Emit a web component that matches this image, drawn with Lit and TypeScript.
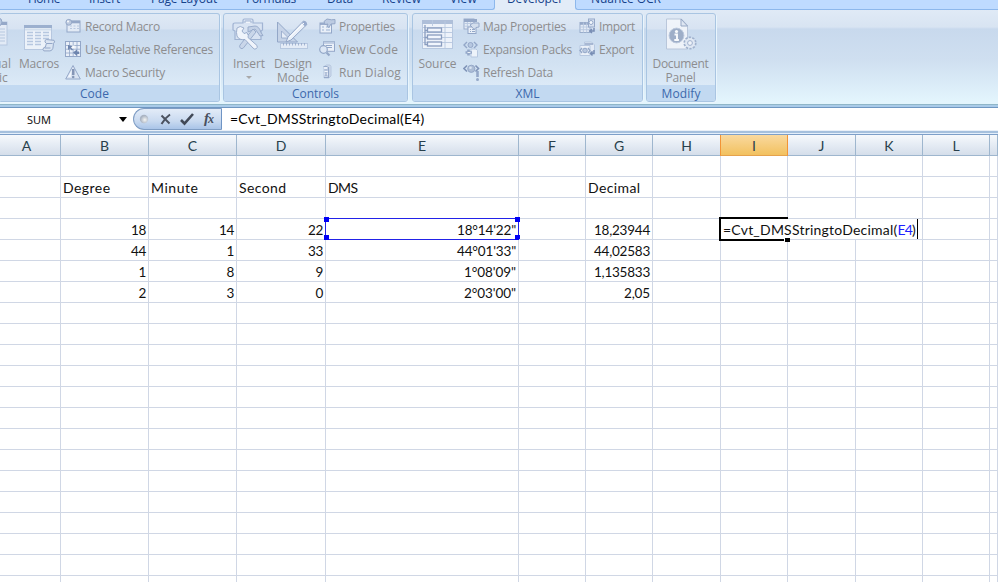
import { LitElement, html, css, svg, nothing } from "lit";
import { customElement, property } from "lit/decorators.js";
import { classMap } from "lit/directives/class-map.js";
import { styleMap } from "lit/directives/style-map.js";

/** A single line of text tracked so that it fills a given width. */
@customElement("fit-text")
class FitText extends LitElement {
  @property() text = "";
  @property({ type: Number }) width = 0;
  static styles = css`
    :host { display: inline-block; white-space: pre; }
    span { display: inline-block; }
  `;
  updated() {
    const span = this.renderRoot.querySelector("span") as HTMLElement;
    span.style.letterSpacing = "0px";
    if (!this.width) return;
    const natural = span.getBoundingClientRect().width;
    span.style.letterSpacing = `${(this.width - natural) / this.text.length}px`;
  }
  render() {
    return html`<span>${this.text}</span>`;
  }
}

const fit = (text: string, width: number) =>
  html`<fit-text .text=${text} .width=${width}></fit-text>`;

const L = "#e6edf7";
const M = "#b4c5de";
const D = "#8ca0c3";

const grid16 = (x: number, y: number) => svg`
  <rect x=${x} y=${y} width="10" height="10" fill=${L} stroke=${D} stroke-width=".9"/>
  <path d=${`M${x} ${y + 1.2}h10`} stroke=${D} stroke-width="2.2"/>
  <path d=${`M${x} ${y + 4.5}h10M${x} ${y + 7.2}h10M${x + 3.4} ${y}v10M${x + 6.7} ${y}v10`} stroke=${M} stroke-width=".9"/>`;

const icons: Record<string, unknown> = {
  basic: svg`<rect x="1" y="4" width="29" height="23" fill=${L} stroke=${M}/>
    <path d="M1 5.500h29" stroke=${D} stroke-width="3"/>
    <circle cx="21" cy="4" r="4" fill=${M} stroke=${D}/>
    <path d="M19 11h9M19 14h9M19 17h9M19 20h9M19 23h9" stroke=${M}/>`,
  macros: svg`<rect x="2.500" y="7.500" width="27" height="24" fill="#f1f5fb" stroke=${M}/>
    <path d="M2 8.500h28" stroke="#94a9cb" stroke-width="3"/><path d="M3 11.500h26" stroke="#d3deed" stroke-width="2"/>
    <path d="M5 14.500h6M13 14.500h6M21 14.500h6M5 17.500h6M13 17.500h6M21 17.500h6M5 20.500h6M13 20.500h6M21 20.500h6M5 23.500h6M13 23.500h6M5 26.500h6M13 26.500h6" stroke=${M} stroke-width="1.400"/>
    <path d="M23 22.500q1-1.500 3-.8l6 .6q1.500 1.700-.5 3l-.6 5q-1 2.700-3 2.600h-6q-2-1.500 0-3.400l1.500-.4 1-3.800q-2-1-1.400-2.800z" fill="#dce6f3" stroke=${D}/>
    <path d="M24.500 25.500h6M22.500 30h6" stroke=${D}/>`,
  record: svg`<rect x="2" y="3" width="13" height="11" fill=${L} stroke=${D}/>
    <path d="M2 4h13" stroke=${D} stroke-width="2.600"/><path d="M5 8h2M8.500 8h2M12 8h2M5 10.500h2M8.500 10.500h2M12 10.500h2" stroke=${M}/>
    <circle cx="3.800" cy="4.300" r="2.900" fill="#b9c6dc" stroke=${D}/><circle cx="3" cy="3.500" r="1" fill="#fff"/>`,
  relative: svg`<rect x=".500" y=".500" width="15" height="15" fill="#edf2fa" stroke=${D}/>
    <path d="M.5 4.500h15M.5 8.200h15M.5 12h15M4.500 .5v15M8.200 .5v15M12 .5v15" stroke=${D} stroke-width=".800"/>
    <path d="M4.500 4.500h5v3h-5z" fill="#fff"/>
    <path d="M3 4v5l2-1.500 2 2 1-1-2-2L7.500 5zM8 11.500l4-3v2h2v2.500h-2v2z" fill="#6179a5"/>`,
  security: svg`<path d="M8 1.500 15.300 15H.7z" fill="#dae3f1" stroke=${D} stroke-linejoin="round"/>
    <path d="M8 3.500 3 13h2.500z" fill="#f7faff"/>
    <path d="M8.200 5v6" stroke="#7a8cae" stroke-width="2.600"/><circle cx="8.200" cy="13" r="1.300" fill="#7a8cae"/>`,
  insert: svg`<path d="M11 5V2.500Q11 1 12.500 1h7Q21 1 21 2.500V5h9.500v7l-1.500 1v8.500H3V13l-2-1V7q0-2 2-2z" fill="#dae4f3" stroke="#9aaecf" stroke-width="1.200"/>
    <path d="M13 5V3h6v2" fill="#f5f8fd" stroke="#9aaecf"/>
    <path d="M16 9l7-1q4 0 6 6.500l2 3-3 .5-2-3-3-4-7 3z" fill="#c1cfe5" stroke=${D} stroke-width=".900"/>
    <path d="M21 11 8 27q-1 2 .5 3.200t3-.4L24 14z" fill="#c9d6e9" stroke=${D} stroke-width=".900"/>
    <path d="M5 10q3-3 7 0l-2 3 2 2.500 3-1q2 3.300 1 5l9 8q1 2.500-1 3.300t-3-.8l-8-8.500q-6 1-8-3.500-1-3 0-8z" fill="#f5f8fd" stroke=${D} stroke-width=".900"/>`,
  design: svg`<path d="M1.500 4v20h20z" fill="#c5d2e7" stroke=${D}/><path d="M5.500 13v7h7z" fill="#eaf0f9" stroke=${D} stroke-width=".800"/>
    <path d="M27.500 3q3 1 3.400 3.500L15 22l-5 2 2-5z" fill="#eff4fb" stroke=${D}/>
    <path d="M26 5l3 3.500 2-2q0-3-3-3.800z" fill="#8fa4c8"/><path d="M14 19l14-14" stroke="#fff"/>
    <rect x="4.500" y="25.500" width="27" height="5" fill="#e8eef8" stroke=${M}/><path d="M7.500 25v2.500M10.500 25v2.500M13.500 25v2.500M16.500 25v2.500M19.500 25v2.500M22.500 25v2.500M25.500 25v2.500M28.500 25v2.500" stroke=${D} stroke-width=".800"/>`,
  properties: svg`<rect x="1" y="5" width="11.500" height="10" fill="#eef3fa" stroke=${D}/><path d="M1 6h11" stroke=${D} stroke-width="1.800"/>
    <path d="M3 9h2M3 12h2M7 9h4M7 12h4" stroke=${M} stroke-width="1.600"/>
    <path d="M5 3.500 8 1l4.500.8 3.500-.3v4.200L12 6l-2 3.500L8 8l1-2-3 .5z" fill="#b9c8e0" stroke=${D}/>`,
  view: svg`<rect x="4.500" y=".800" width="11" height="9.500" fill="#f0f4fb" stroke=${D}/><path d="M4.500 2h11" stroke=${M} stroke-width="1.500"/>
    <path d="M7 4.500h6M8 6.500h5" stroke=${D}/><circle cx="4.500" cy="8.500" r="3.800" fill="#dfe9f6" stroke=${D} stroke-width="1.200"/>
    <path d="M7.500 11.500l3 3" stroke=${D} stroke-width="2.200"/>`,
  run: svg`<path d="M5 2.500 7.500 1h3.500l1 1.500V12l-2 2H5z" fill="#cbd7e9" stroke=${M}/>
    <path d="M5 4h3M5.500 7.500h4.500M5.500 10h4.500" stroke="#f7faff" stroke-width="1.500"/>
    <path d="M4.500 2.500h4M9.500 3v10M5 13.500h5M5.500 6h3M7 8v4" stroke=${D} stroke-width="1.200"/>`,
  source: svg`<rect x="1.500" y="2.500" width="30" height="28" fill="#f2f6fc" stroke=${M}/>
    <path d="M1 4h31" stroke="#a9bad6" stroke-width="4"/>
    <path d="M2 9.500h29M2 14.500h29M2 19.500h29M2 24.500h29M24 3v27M11.500 2v6" stroke=${M} stroke-width=".900"/>
    <path d="M4 7v19.500h3M4 12.500h3M4 19.500h3" stroke="#8094b9" stroke-width="1.300" fill="none"/>
    <g fill="#f7faff" stroke="#8094b9" stroke-width="1.300"><rect x="6.500" y="10" width="14" height="4"/><rect x="6.500" y="17" width="14" height="4"/><rect x="6.500" y="24" width="14" height="4"/></g>`,
  map: svg`${grid16(1, 1)}<path d="M1 1h13v3H1z" fill=${D}/>
    <rect x="5" y="9" width="8" height="6.500" fill="#eef3fa" stroke=${D}/><path d="M7 11.500h1M9 11.500h3M7 13.500h1M9 13.500h3" stroke=${D}/>
    <path d="M7 7l3-2h6v4l-3 .5-2 2-1.500-2z" fill="#d3deed" stroke=${D}/>`,
  expansion: svg`<path d="M4 1 1 4l3 3M11 1l3 3-3 3" stroke=${D} stroke-width="1.400" fill="none"/><circle cx="7.500" cy="4" r="2.500" fill=${M} stroke=${D}/>
    <path d="M8 8h5l1.500 1.500V16H8z" fill="#f2f6fc" stroke=${M}/><path d="M5.500 8.500v6M2.500 11.500h6.500" stroke=${D} stroke-width="2.600"/><path d="M4.500 11.500h3" stroke="#f2f6fc"/>`,
  refresh: svg`<path d="M4 1.500 1 4.500l3 3M12.500 1.500l3 3-3 3" stroke="#7489b0" stroke-width="1.600" fill="none"/><circle cx="8.300" cy="4.800" r="3.600" fill="#a8b9d3" stroke=${D}/>
    <circle cx="7.500" cy="3.800" r="1.300" fill="#dce6f3"/><path d="M14.500 7v6" stroke=${D} stroke-width="2.600"/><circle cx="14.500" cy="15.500" r="1.500" fill=${D}/>`,
  import: svg`${grid16(1, 4.5)}<rect x="9.500" y="1" width="6" height="8" fill="#d6e0ef" stroke=${D}/>
    <circle cx="12" cy="4.500" r="2" fill="#f7faff" stroke=${D}/><path d="M15 10v3h-4M13 11l-2.300 2 2.300 2" stroke="#6d83ad" stroke-width="1.500" fill="none"/>`,
  export: svg`<path d="M5.500 1h7l3 3v7H5.500z" fill="#e5ecf7" stroke=${M}/><path d="M1 4.500h10v10H1z" fill="#eef3fa" stroke=${M}/>
    <path d="M3 7 1 9.500 3 12M9 7l2 2.500L9 12" stroke=${D} stroke-width="1.300" fill="none"/><circle cx="6" cy="9.500" r="2.300" fill=${M} stroke=${D}/>
    <path d="M15 9v3.500h-3M13.500 10.500l-2 2 2 2" stroke="#6d83ad" stroke-width="1.500" fill="none"/><path d="M6 3h8" stroke=${D} stroke-width="1.500"/>`,
  document: svg`<path d="M2.500 1h15l6 6.500V31h-21z" fill="#f3f6fb" stroke="#b6c3d8"/><path d="M17 1v7h6.500z" fill="#dfe7f2" stroke="#8c9fbf"/>
    <circle cx="12.500" cy="17.500" r="7.400" fill="#98a8c3" stroke="#b9c6db"/>
    <circle cx="12.500" cy="13.500" r="1.600" fill="#fff"/><path d="M10.500 16.500h2.500v5M10.300 22h4.600" stroke="#fff" stroke-width="1.900" fill="none"/>
    <circle cx="26" cy="25" r="5.600" fill="#e3eaf4" stroke="#9bacc9" stroke-width="2" stroke-dasharray="2.200 1.300"/>
    <circle cx="26" cy="25" r="4.800" fill="#e3eaf4"/><circle cx="26" cy="25" r="2.400" fill="#f4f7fb" stroke="#9bacc9"/>`,
};

const icon = (name: string, size: number) => html`<svg
  class="icon" width=${size} height=${size} viewBox=${`0 0 ${size} ${size}`} fill="none">${icons[name]}</svg>`;

type Small = [string, string, number];

@customElement("ribbon-group")
class RibbonGroup extends LitElement {
  @property() label = "";
  @property({ type: Number }) labelWidth = 0;
  static styles = css`
    :host {
      box-sizing: border-box; height: 89px; display: flex; flex-direction: column;
      border: 1px solid #a9c5e2; border-radius: 3px; overflow: hidden;
      box-shadow: 1px 1px 0 #e9f5fd;
      background: linear-gradient(#dfe9f5 0, #d7e3f2 15px, #c9daee 16px, #d2e2f2 50px, #dceaf7 72px);
    }
    .body { height: 71px; display: flex; box-sizing: border-box; }
    .title {
      height: 16px; line-height: 17px; text-align: center; background: #c2d9f1;
      color: #3c68ac; font-size: 12px; padding-right: var(--title-shift, 0px);
    }
  `;
  render() {
    return html`<div class="body"><slot></slot></div>
      <div class="title">${fit(this.label, this.labelWidth)}</div>`;
  }
}

@customElement("excel-ribbon")
class ExcelRibbon extends LitElement {
  static styles = css`
    :host {
      display: block; height: 108px; overflow: hidden; font: 12px "Open Sans", "Noto Sans", sans-serif;
    }
    .tabs {
      height: 10px; display: grid; grid-template-columns: 495px 80px 1fr; overflow: hidden;
      background: #e2ecf8;
    }
    .strip { background: #bfdbff; border: 1px solid #8db8ec; border-top: 0; overflow: hidden; height: 10px; box-sizing: border-box; }
    .left { border-left: 0; border-bottom-right-radius: 3px; }
    .right { border-right: 0; border-bottom-left-radius: 3px; }
    .row { display: flex; margin-top: -10px; line-height: 18px; color: #15428b; height: 18px; }
    .panel {
      box-sizing: border-box; height: 94px; padding: 3px 0 0; display: flex;
      background: linear-gradient(#e0eaf6 0, #d8e4f2 17px, #c8d9ed 19px, #cfdff0 50px, #e3f5fd 92px);
    }
    .edge { height: 4px; background: linear-gradient(#8fb6c8 0 1px, #a9cbe8 1px 3px, #6f97c2 3px); }
    .code { width: 221px; border-left: 0; margin-left: -1px; margin-right: 3px; --title-shift: 29px; }
    .controls { width: 185px; margin-right: 4px; }
    .xml { width: 231px; margin-right: 3px; }
    .modify { width: 70px; }
    .big { display: flex; flex-direction: column; align-items: center; color: #8d8d8f; line-height: 14px; padding-top: 4px; box-sizing: border-box; }
    .big .icon { margin-bottom: 5px; flex: none; }
    .small { display: flex; flex-direction: column; padding-top: 1px; }
    .item { height: 23px; display: flex; align-items: center; color: #8d8d8f; gap: 3px; }
    .icon { display: block; flex: none; opacity: .88; }
    .arrow { width: 0; height: 0; border: 3px solid transparent; border-top-color: #a9a9aa; margin-top: 5px; border-bottom: 0; }
    .b0 { width: 12px; align-items: flex-end; }
    .b1 { width: 56px; } .b2 { width: 50px; } .b3 { width: 38px; } .b4 { width: 49px; } .b5 { width: 67px; }
    .s1 { margin-left: -2px; } .s2 { margin-left: 7px; } .s3 { margin-left: 1px; } .s4 { margin-left: 7px; }
  `;
  small(cls: string, items: Small[]) {
    return html`<div class="small ${cls}">${items.map(
      ([i, t, w]) => html`<div class="item">${icon(i, 17)}${fit(t, w)}</div>`)}</div>`;
  }
  big(cls: string, name: string, lines: [string, number][], arrow = false) {
    return html`<div class="big ${cls}">${icon(name, 34)}
      ${lines.map(([t, w]) => fit(t, w))}
      ${arrow ? html`<span class="arrow"></span>` : nothing}</div>`;
  }
  tab(text: string, width: number, margin: number) {
    return html`<span style=${styleMap({ marginLeft: `${margin}px` })}>${fit(text, width)}</span>`;
  }
  render() {
    return html`
      <div class="tabs">
        <div class="strip left"><div class="row">
          ${this.tab("Home", 32, 28)}${this.tab("Insert", 31, 29)}${this.tab("Page Layout", 66, 31)}
          ${this.tab("Formulas", 50, 29)}${this.tab("Data", 26, 31)}${this.tab("Review", 39, 29)}${this.tab("View", 27, 29)}
        </div></div>
        <div><div class="row">${this.tab("Developer", 56, 12)}</div></div>
        <div class="strip right"><div class="row">${this.tab("Nuance OCR", 70, 15)}</div></div>
      </div>
      <div class="panel">
        <ribbon-group class="code" label="Code" .labelWidth=${29}>
          ${this.big("b0", "basic", [["ual", 17], ["ic ", 12]])}
          ${this.big("b1", "macros", [["Macros", 40]])}
          ${this.small("s1", [["record", "Record Macro", 75], ["relative", "Use Relative References", 128], ["security", "Macro Security", 80]])}
        </ribbon-group>
        <ribbon-group class="controls" label="Controls" .labelWidth=${47}>
          ${this.big("b2", "insert", [["Insert", 32]], true)}
          ${this.big("b3", "design", [["Design", 38], ["Mode", 32]])}
          ${this.small("s2", [["properties", "Properties", 56], ["view", "View Code", 59], ["run", "Run Dialog", 62]])}
        </ribbon-group>
        <ribbon-group class="xml" label="XML" .labelWidth=${24}>
          ${this.big("b4", "source", [["Source", 38]])}
          ${this.small("s3", [["map", "Map Properties", 83], ["expansion", "Expansion Packs", 89], ["refresh", "Refresh Data", 70]])}
          ${this.small("s4", [["import", "Import", 36], ["export", "Export", 35]])}
        </ribbon-group>
        <ribbon-group class="modify" label="Modify" .labelWidth=${39}>
          ${this.big("b5", "document", [["Document", 56], ["Panel", 30]])}
        </ribbon-group>
      </div>
      <div class="edge"></div>`;
  }
}

@customElement("formula-bar")
class FormulaBar extends LitElement {
  static styles = css`
    :host { display: grid; grid-template-columns: 133px 89px 1fr; grid-template-rows: 22px 5px; height: 27px; background: #fff; }
    .name { box-sizing: border-box; padding: 0 6px 0 27px; display: flex; align-items: center; justify-content: space-between;
      font: 11px "Noto Sans", sans-serif; color: #111; }
    .drop { border: 4px solid transparent; border-top: 5px solid #000; border-bottom: 0; }
    .buttons { box-sizing: border-box; border: 1px solid #7f9dc4; border-right-color: #6f94c4; border-radius: 12px 0 0 12px;
      background: linear-gradient(#e3ecf8, #c9daf0 60%, #a9c4e8); display: flex; }
    svg { display: block; }
    .fx { font: italic bold 15px/19px "Liberation Serif", serif; color: #48505e; width: 16px; margin-left: 3px; letter-spacing: -1px; }
    .fx small { font-size: 12px; }
    .text { padding-left: 8px; color: #000; font: 14px/22px Lato, sans-serif; }
    .edge { grid-column: 1 / -1; background: linear-gradient(#e9f0f8 0 1px, #a5c0dd 1px 3px, #e3effb 3px 4px, #7d9fc8 4px); }
  `;
  render() {
    return html`
      <div class="name">${fit("SUM", 24)}<span class="drop"></span></div>
      <div class="buttons">
        <svg width="67" height="20" viewBox="0 0 67 20" fill="none">
          <defs><radialGradient id="b" cx=".6" cy=".6"><stop stop-color="#f6f6f4"/><stop offset="1" stop-color="#aab4c3"/></radialGradient></defs>
          <circle cx="10" cy="10" r="4.200" fill="url(#b)"/>
          <path d="M27.500 6.500l8 8M36 5.500q-5 3.500-8.500 9.500" stroke="#4b5260" stroke-width="2"/>
          <path d="M47 11l3.500 3.500L59 5" stroke="#414957" stroke-width="2.600"/>
        </svg>
        <span class="fx">f<small>x</small></span>
      </div>
      <div class="text">${fit("=Cvt_DMSStringtoDecimal(E4)", 194.5)}</div>
      <div class="edge"></div>`;
  }
}

const columns: [string, number][] = [
  ["A", 61], ["B", 88], ["C", 88], ["D", 89], ["E", 193], ["F", 67], ["G", 67],
  ["H", 68], ["I", 67], ["J", 68], ["K", 67], ["L", 67], ["", 8],
];

const cells: Record<string, [string, number, boolean?]> = {
  B2: ["Degree", 47.5, true], C2: ["Minute", 47.5, true], D2: ["Second", 47.5, true], E2: ["DMS", 29.5, true], G2: ["Decimal", 52.5, true],
  B4: ["18", 15], C4: ["14", 15], D4: ["22", 15], E4: ["18°14'22\"", 59], G4: ["18,23944", 56],
  B5: ["44", 15], C5: ["1", 7.5], D5: ["33", 15], E5: ["44°01'33\"", 59], G5: ["44,02583", 56],
  B6: ["1", 7.5], C6: ["8", 7.5], D6: ["9", 7.5], E6: ["1°08'09\"", 52], G6: ["1,135833", 56],
  B7: ["2", 7.5], C7: ["3", 7.5], D7: ["0", 7.5], E7: ["2°03'00\"", 52], G7: ["2,05", 26],
};

@customElement("work-sheet")
class WorkSheet extends LitElement {
  static styles = css`
    :host { display: block; font: 13.5px Lato, sans-serif; color: #111; }
    .row { display: grid; height: 21px; grid-template-rows: 21px; }
    .head div { box-sizing: border-box; border-right: 1px solid #9eb6ce; border-bottom: 1px solid #9eb6ce; text-align: center;
      font: 14px/21px Lato, sans-serif; color: #283f4c; background: linear-gradient(#f6f9fc, #e3eaf3 55%, #d5deea); }
    .head .first { padding-right: 7px; }
    .head .active { background: linear-gradient(#f9d99f, #f2c15f); border: 1px solid #f29436; border-top: 0; margin-left: -1px; border-bottom-color: #e5a24d; }
    .cell { box-sizing: border-box; border-right: 1px solid #d0d7e5; border-bottom: 1px solid #d0d7e5; line-height: 22px;
      text-align: right; padding: 0 2px; position: relative; }
    .cell.start { text-align: left; font-size: 14px; }
    .mark { position: absolute; box-sizing: border-box; left: -1px; top: -1px; right: -1px; bottom: -1px; border: 1px solid #2222e8; }
    .mark i { position: absolute; width: 5px; height: 5px; background: #0000f5; }
    .mark i:nth-child(1) { left: -2px; top: -2px; } .mark i:nth-child(2) { right: -2px; top: -2px; }
    .mark i:nth-child(3) { left: -2px; bottom: -1px; } .mark i:nth-child(4) { right: -2px; bottom: -1px; }
    .editor { position: absolute; left: -2px; top: -2px; width: 200px; height: 24px; z-index: 2; display: flex; box-sizing: border-box; font-size: 14px; }
    .editor::before { content: ""; position: absolute; left: 0; top: 0; width: 69px; height: 24px; box-sizing: border-box; border: 2px solid #000; border-right: 0; }
    .editor::after { content: ""; position: absolute; left: 65px; bottom: -1px; width: 5px; height: 4px; background: #000; border-left: 1px solid #fff; }
    .input { position: relative; margin: 2px 0 2px 2px; padding-left: 2px; height: 20px; line-height: 22px; background: #fff; text-align: left; width: 197px; box-sizing: border-box; border-right: 1px solid #000; white-space: nowrap; }
    .ref { color: #2020ff; }
  `;
  render() {
    const tracks = styleMap({ gridTemplateColumns: columns.map((c) => `${c[1]}px`).join(" ") });
    return html`
      <div class="row head" style=${tracks}>${columns.map(([n], i) =>
        html`<div class=${classMap({ active: n === "I", first: i === 0 })}>${n}</div>`)}</div>
      ${Array.from({ length: 21 }, (_, r) => html`<div class="row" style=${tracks}>${columns.map(([n]) => {
        const key = `${n}${r + 1}`;
        const c = cells[key];
        return html`<div class=${classMap({ cell: true, start: !!c?.[2] })}>${c ? fit(c[0], c[1]) : nothing}${
          key === "E4" ? html`<div class="mark"><i></i><i></i><i></i><i></i></div>` : nothing}${
          key === "I4" ? html`<div class="editor"><div class="input">${fit("=Cvt_DMSStringtoDecimal(", 174.5)}<span class="ref">${fit("E4", 14.5)}</span>)</div></div>` : nothing}</div>`;
      })}</div>`)}`;
  }
}

@customElement("app-root")
class AppRoot extends LitElement {
  static styles = css`
    :host { display: block; width: 998px; height: 582px; overflow: hidden; background: #fff; }
  `;
  render() {
    return html`<excel-ribbon></excel-ribbon><formula-bar></formula-bar><work-sheet></work-sheet>`;
  }
}
